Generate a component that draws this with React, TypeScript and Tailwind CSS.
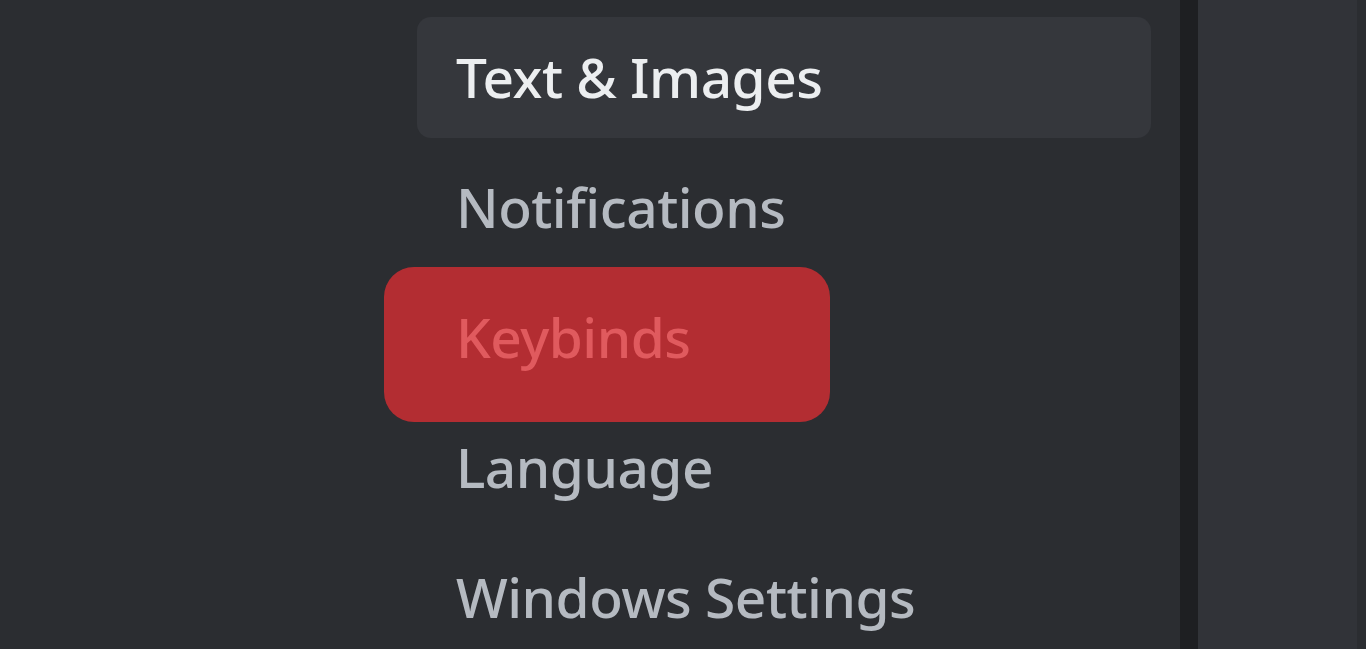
const items = [
  { label: "Text & Images", selected: true },
  { label: "Notifications" },
  { label: "Keybinds", marked: true },
  { label: "Language" },
  { label: "Windows Settings" },
];

export default function App() {
  return (
    <div
      className="flex h-[649px] w-[1366px] overflow-hidden bg-[#2b2d31]"
      style={{ fontFamily: '"Noto Sans", "Open Sans", sans-serif' }}
    >
      <nav className="flex w-[1180px] shrink-0 flex-col gap-[9px] pl-[417px] pr-[29px] pt-[17px]">
        {items.map((item) => (
          <div key={item.label} className="relative">
            {item.marked && (
              <div className="absolute left-[-33px] top-[-10px] h-[155px] w-[446px] rounded-[30px] bg-[#b32d32]" />
            )}
            <div
              className={
                "relative flex h-[121px] items-center rounded-[14px] pl-[39px] text-[55px] font-medium tracking-[-0.5px] whitespace-nowrap " +
                (item.selected
                  ? "bg-[#35373c] text-[#eceef0]"
                  : item.marked
                    ? "text-[#e05a5e]"
                    : "text-[#b5bac1]")
              }
            >
              {item.label}
            </div>
          </div>
        ))}
      </nav>
      <div className="w-[18px] shrink-0 bg-[#1e1f22]" />
      <div className="flex-1 bg-[#313338]" />
      <div className="w-[9px] shrink-0 bg-[#2b2d31]" />
    </div>
  );
}
